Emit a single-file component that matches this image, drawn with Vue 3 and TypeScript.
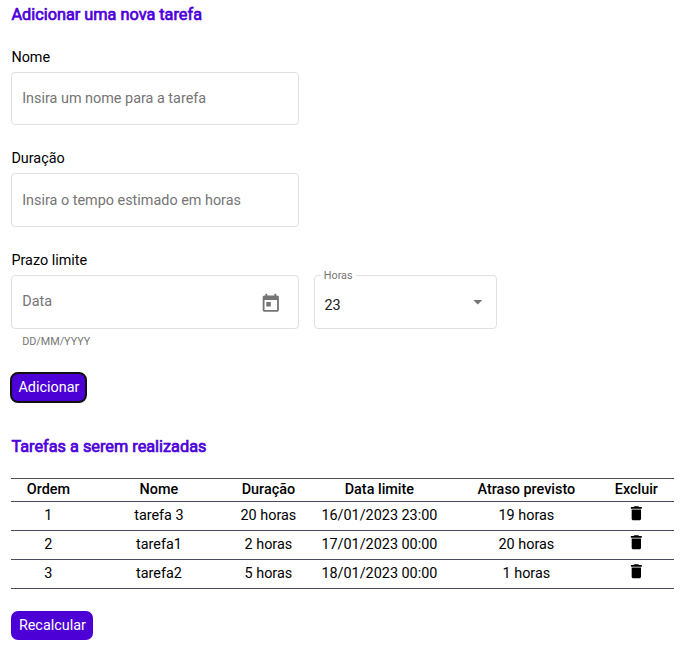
<script setup lang="ts">
interface Tarefa {
  ordem: number
  nome: string
  duracao: string
  limite: string
  atraso: string
}

const tarefas: Tarefa[] = [
  { ordem: 1, nome: 'tarefa 3', duracao: '20 horas', limite: '16/01/2023 23:00', atraso: '19 horas' },
  { ordem: 2, nome: 'tarefa1', duracao: '2 horas', limite: '17/01/2023 00:00', atraso: '20 horas' },
  { ordem: 3, nome: 'tarefa2', duracao: '5 horas', limite: '18/01/2023 00:00', atraso: '1 horas' },
]
</script>

<template>
  <main class="page">
    <h2 class="title">Adicionar uma nova tarefa</h2>

    <label class="label first">Nome</label>
    <div class="field wide"><span class="placeholder">Insira um nome para a tarefa</span></div>

    <label class="label">Duração</label>
    <div class="field wide"><span class="placeholder">Insira o tempo estimado em horas</span></div>

    <label class="label">Prazo limite</label>
    <div class="row">
      <div class="date-col">
        <div class="field wide date">
          <span class="placeholder data">Data</span>
          <svg class="cal" width="21.6" height="21.6" viewBox="0 0 24 24" aria-hidden="true">
            <path fill="#757575" d="M19 4h-1V2h-2v2H8V2H6v2H5c-1.1 0-2 .9-2 2v14c0 1.1.9 2 2 2h14c1.1 0 2-.9 2-2V6c0-1.1-.9-2-2-2zm0 16H5V9h14v11zM7 11h5v5H7z" />
          </svg>
        </div>
        <div class="helper">DD/MM/YYYY</div>
      </div>
      <div class="field select">
        <span class="legend">Horas</span>
        <span class="value">23</span>
        <svg class="caret" width="21.6" height="21.6" viewBox="0 0 24 24" aria-hidden="true">
          <path fill="#757575" d="M7 10l5 5 5-5z" />
        </svg>
      </div>
    </div>

    <button class="btn focused" type="button">Adicionar</button>

    <h2 class="title second">Tarefas a serem realizadas</h2>

    <table class="table">
      <colgroup>
        <col class="c1" /><col class="c2" /><col class="c3" /><col class="c4" /><col class="c5" /><col class="c6" />
      </colgroup>
      <thead>
        <tr>
          <th>Ordem</th><th>Nome</th><th>Duração</th><th>Data limite</th><th>Atraso previsto</th><th>Excluir</th>
        </tr>
      </thead>
      <tbody>
        <tr v-for="t in tarefas" :key="t.ordem">
          <td>{{ t.ordem }}</td>
          <td>{{ t.nome }}</td>
          <td>{{ t.duracao }}</td>
          <td>{{ t.limite }}</td>
          <td>{{ t.atraso }}</td>
          <td class="trash-cell">
            <svg class="trash" width="18.7" height="18.7" viewBox="0 0 24 24" aria-hidden="true">
              <path fill="#000" d="M6 19c0 1.1.9 2 2 2h8c1.1 0 2-.9 2-2V7H6v12zM19 4h-3.5l-1-1h-5l-1 1H5v2h14V4z" />
            </svg>
          </td>
        </tr>
      </tbody>
    </table>

    <button class="btn recalc" type="button">Recalcular</button>
  </main>
</template>

<style scoped>
.page {
  box-sizing: border-box;
  width: 693px;
  height: 653px;
  padding: 0 18px 0 11.4px;
  font-family: Roboto, "Liberation Sans", sans-serif;
  color: #000;
  overflow: hidden;
}
.title {
  margin: 0;
  font-size: 16.3px;
  line-height: 30px;
  font-weight: 400;
  -webkit-text-stroke: 0.7px #4d00da;
  color: #4d00da;
}
.second {
  margin-top: 29px;
}
.label {
  display: block;
  margin-top: 24px;
  font-size: 14.4px;
  line-height: 20px;
  height: 20px;
}
.first {
  margin-top: 17.8px;
}
.field {
  box-sizing: border-box;
  border: 1px solid #e0e0e0;
  border-radius: 4px;
  height: 53.5px;
  display: flex;
  align-items: center;
  margin-top: 4px;
  background: #fff;
}
.wide {
  width: 288px;
  padding: 0 9.8px;
}
.placeholder {
  font-size: 14.4px;
  color: #757575;
}
.row {
  display: flex;
  gap: 15px;
  align-items: flex-start;
}
.row .field {
  height: 54px;
}
.date {
  justify-content: space-between;
}
.data {
  margin-bottom: 1px;
}
.cal {
  margin-right: 7px;
  margin-top: 1px;
}
.helper {
  margin: 6px 0 0 10.8px;
  font-size: 10.8px;
  line-height: 14px;
  color: #757575;
}
.select {
  position: relative;
  width: 183px;
  padding: 0 9.6px 0 9px;
  justify-content: space-between;
}
.legend {
  position: absolute;
  top: -6px;
  left: 5.4px;
  padding: 0 3px;
  background: #fff;
  font-size: 10.8px;
  line-height: 12px;
  color: #757575;
}
.value {
  font-size: 14.4px;
  color: #212121;
  margin-top: 7px;
}
.caret {
  margin-right: -2px;
}
.btn {
  display: block;
  box-sizing: border-box;
  border: 0;
  background: #4c00d6;
  color: #fff;
  font-family: Roboto, "Liberation Sans", sans-serif;
  font-size: 14.4px;
  border-radius: 6px;
  padding: 0;
}
.focused {
  margin: 23.2px 0 0 -1px;
  width: 77px;
  height: 31px;
  border: 2px solid #111;
  border-radius: 8px;
}
.recalc {
  margin-top: 22px;
  width: 82px;
  height: 29px;
  border-radius: 7px;
}
.table {
  width: 663px;
  margin-top: 16px;
  border-collapse: collapse;
  table-layout: fixed;
  font-size: 14.4px;
}
.c1 { width: 74px; }
.c2 { width: 147px; }
.c3 { width: 72px; }
.c4 { width: 150px; }
.c5 { width: 144px; }
.c6 { width: 76px; }
th, td {
  padding: 0;
  text-align: center;
  border-top: 1px solid #4a4d5e;
  border-bottom: 1px solid #4a4d5e;
}
th {
  height: 22px;
  font-weight: 500;
}
td {
  height: 28px;
}
.trash-cell {
  vertical-align: top;
}
.trash {
  display: block;
  margin: 2px auto 0;
}
</style>
